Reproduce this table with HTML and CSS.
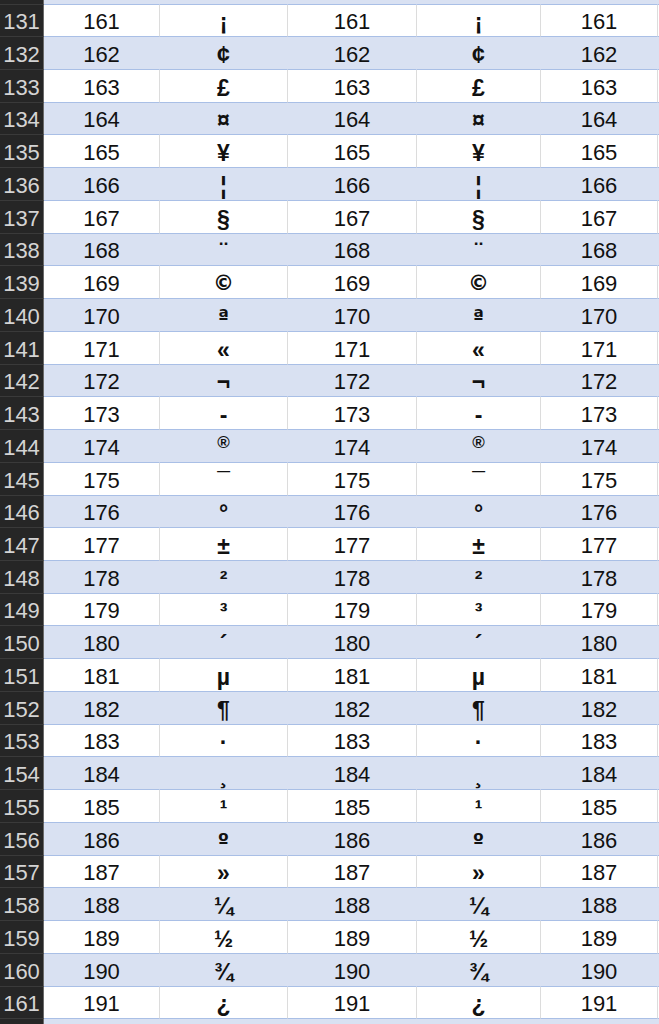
FILE: index.html
```html
<!DOCTYPE html>
<html>
<head>
<meta charset="utf-8">
<link rel="stylesheet" href="styles.css">
</head>
<body>
<div class="sheet">
  <div class="row band stub"><div class="hd"></div><div class="c"></div><div class="c"></div><div class="c"></div><div class="c"></div><div class="c"></div><div class="c last"></div></div>
  <div class="row"><div class="hd">131</div><div class="c">161</div><div class="c s">¡</div><div class="c">161</div><div class="c s">¡</div><div class="c">161</div><div class="c last"></div></div>
  <div class="row band"><div class="hd">132</div><div class="c">162</div><div class="c s">¢</div><div class="c">162</div><div class="c s">¢</div><div class="c">162</div><div class="c last"></div></div>
  <div class="row"><div class="hd">133</div><div class="c">163</div><div class="c s">£</div><div class="c">163</div><div class="c s">£</div><div class="c">163</div><div class="c last"></div></div>
  <div class="row band"><div class="hd">134</div><div class="c">164</div><div class="c s">¤</div><div class="c">164</div><div class="c s">¤</div><div class="c">164</div><div class="c last"></div></div>
  <div class="row"><div class="hd">135</div><div class="c">165</div><div class="c s">¥</div><div class="c">165</div><div class="c s">¥</div><div class="c">165</div><div class="c last"></div></div>
  <div class="row band"><div class="hd">136</div><div class="c">166</div><div class="c s">¦</div><div class="c">166</div><div class="c s">¦</div><div class="c">166</div><div class="c last"></div></div>
  <div class="row"><div class="hd">137</div><div class="c">167</div><div class="c s">§</div><div class="c">167</div><div class="c s">§</div><div class="c">167</div><div class="c last"></div></div>
  <div class="row band"><div class="hd">138</div><div class="c">168</div><div class="c s">¨</div><div class="c">168</div><div class="c s">¨</div><div class="c">168</div><div class="c last"></div></div>
  <div class="row"><div class="hd">139</div><div class="c">169</div><div class="c s big">©</div><div class="c">169</div><div class="c s big">©</div><div class="c">169</div><div class="c last"></div></div>
  <div class="row band"><div class="hd">140</div><div class="c">170</div><div class="c s ord">ª</div><div class="c">170</div><div class="c s ord">ª</div><div class="c">170</div><div class="c last"></div></div>
  <div class="row"><div class="hd">141</div><div class="c">171</div><div class="c s">«</div><div class="c">171</div><div class="c s">«</div><div class="c">171</div><div class="c last"></div></div>
  <div class="row band"><div class="hd">142</div><div class="c">172</div><div class="c s">¬</div><div class="c">172</div><div class="c s">¬</div><div class="c">172</div><div class="c last"></div></div>
  <div class="row"><div class="hd">143</div><div class="c">173</div><div class="c s">-</div><div class="c">173</div><div class="c s">-</div><div class="c">173</div><div class="c last"></div></div>
  <div class="row band"><div class="hd">144</div><div class="c">174</div><div class="c s small">®</div><div class="c">174</div><div class="c s small">®</div><div class="c">174</div><div class="c last"></div></div>
  <div class="row"><div class="hd">145</div><div class="c">175</div><div class="c s">¯</div><div class="c">175</div><div class="c s">¯</div><div class="c">175</div><div class="c last"></div></div>
  <div class="row band"><div class="hd">146</div><div class="c">176</div><div class="c s">°</div><div class="c">176</div><div class="c s">°</div><div class="c">176</div><div class="c last"></div></div>
  <div class="row"><div class="hd">147</div><div class="c">177</div><div class="c s">±</div><div class="c">177</div><div class="c s">±</div><div class="c">177</div><div class="c last"></div></div>
  <div class="row band"><div class="hd">148</div><div class="c">178</div><div class="c s">²</div><div class="c">178</div><div class="c s">²</div><div class="c">178</div><div class="c last"></div></div>
  <div class="row"><div class="hd">149</div><div class="c">179</div><div class="c s">³</div><div class="c">179</div><div class="c s">³</div><div class="c">179</div><div class="c last"></div></div>
  <div class="row band"><div class="hd">150</div><div class="c">180</div><div class="c s">´</div><div class="c">180</div><div class="c s">´</div><div class="c">180</div><div class="c last"></div></div>
  <div class="row"><div class="hd">151</div><div class="c">181</div><div class="c s">µ</div><div class="c">181</div><div class="c s">µ</div><div class="c">181</div><div class="c last"></div></div>
  <div class="row band"><div class="hd">152</div><div class="c">182</div><div class="c s">¶</div><div class="c">182</div><div class="c s">¶</div><div class="c">182</div><div class="c last"></div></div>
  <div class="row"><div class="hd">153</div><div class="c">183</div><div class="c s">·</div><div class="c">183</div><div class="c s">·</div><div class="c">183</div><div class="c last"></div></div>
  <div class="row band"><div class="hd">154</div><div class="c">184</div><div class="c s">¸</div><div class="c">184</div><div class="c s">¸</div><div class="c">184</div><div class="c last"></div></div>
  <div class="row"><div class="hd">155</div><div class="c">185</div><div class="c s">¹</div><div class="c">185</div><div class="c s">¹</div><div class="c">185</div><div class="c last"></div></div>
  <div class="row band"><div class="hd">156</div><div class="c">186</div><div class="c s ord">º</div><div class="c">186</div><div class="c s ord">º</div><div class="c">186</div><div class="c last"></div></div>
  <div class="row"><div class="hd">157</div><div class="c">187</div><div class="c s">»</div><div class="c">187</div><div class="c s">»</div><div class="c">187</div><div class="c last"></div></div>
  <div class="row band"><div class="hd">158</div><div class="c">188</div><div class="c s">¼</div><div class="c">188</div><div class="c s">¼</div><div class="c">188</div><div class="c last"></div></div>
  <div class="row"><div class="hd">159</div><div class="c">189</div><div class="c s">½</div><div class="c">189</div><div class="c s">½</div><div class="c">189</div><div class="c last"></div></div>
  <div class="row band"><div class="hd">160</div><div class="c">190</div><div class="c s">¾</div><div class="c">190</div><div class="c s">¾</div><div class="c">190</div><div class="c last"></div></div>
  <div class="row"><div class="hd">161</div><div class="c">191</div><div class="c s">¿</div><div class="c">191</div><div class="c s">¿</div><div class="c">191</div><div class="c last"></div></div>
  <div class="row band tail"><div class="hd"></div><div class="c"></div><div class="c"></div><div class="c"></div><div class="c"></div><div class="c"></div><div class="c last"></div></div>
</div>
</body>
</html>
```

FILE: styles.css
```css
html, body {
  margin: 0;
  padding: 0;
  background: #ffffff;
  overflow: hidden;
}

.sheet {
  width: 659px;
  height: 1024px;
  overflow: hidden;
  font-family: "Liberation Sans", Arial, sans-serif;
  font-size: 22px;
  color: #111111;
}

.row {
  display: grid;
  grid-template-columns: 44px 116px 128px 129px 124px 117px 1fr;
  height: 32.74px;
  background: #ffffff;
}

.row.stub {
  height: 4.5px;
}

.row.tail {
  height: 12px;
}

.row.band {
  background: #d9e1f2;
}

.hd,
.c {
  box-sizing: border-box;
  display: flex;
  align-items: flex-end;
  justify-content: center;
  padding-bottom: 3px;
  line-height: 22px;
  overflow: hidden;
  white-space: nowrap;
}

.hd {
  background: #262626;
  color: #d4d4d4;
  border-bottom: 1px solid #3a3a3a;
  border-right: 1px solid #6a6a6a;
}

.c {
  border-bottom: 1px solid #a9bfe6;
  border-right: 1px solid #dcdcdc;
}

.band .c {
  border-right-color: #d9e1f2;
}

.c.last {
  border-right: none;
}

.c.s {
  font-weight: bold;
  font-size: 23px;
}

.c.s.big {
  font-family: "DejaVu Sans", "Liberation Sans", sans-serif;
  font-weight: bold;
  font-size: 21px;
  padding-bottom: 4px;
}

.c.s.small {
  font-size: 17px;
  padding-bottom: 8px;
}

.c.s.ord {
  font-family: "DejaVu Sans", "Liberation Sans", sans-serif;
  font-size: 20px;
}
```
